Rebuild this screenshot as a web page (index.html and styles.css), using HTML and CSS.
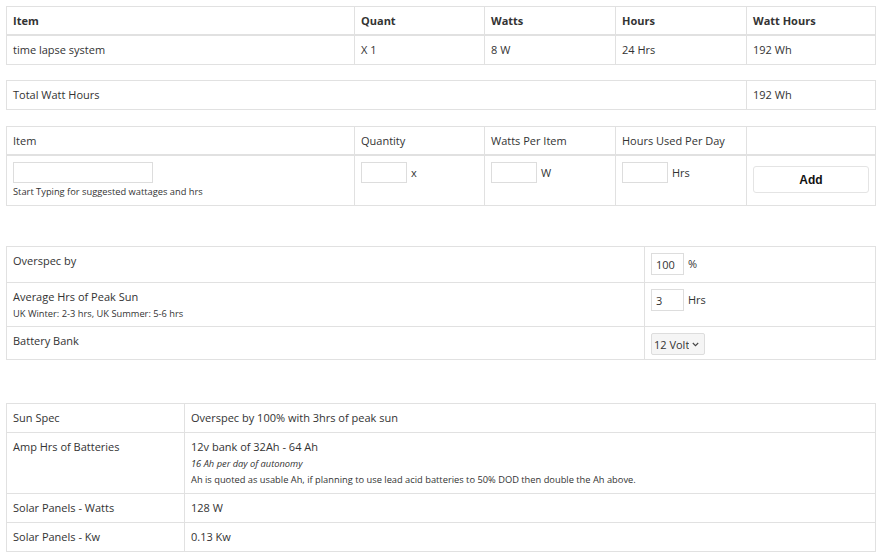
FILE: index.html
```html
<!DOCTYPE html>
<html lang="en">

<head>
  <meta charset="UTF-8">
  <meta name="viewport" content="width=device-width, initial-scale=1.0">
  <title>Solar Calculator</title>
  <link rel="stylesheet" href="styles.css">
</head>

<body>
  <div class="calc">
    <table class="grid items">
      <colgroup>
        <col class="c-item"><col class="c-q"><col class="c-num"><col class="c-num"><col>
      </colgroup>
      <thead>
        <tr>
          <th>Item</th>
          <th>Quant</th>
          <th>Watts</th>
          <th>Hours</th>
          <th>Watt Hours</th>
        </tr>
      </thead>
      <tbody>
        <tr>
          <td>time lapse system</td>
          <td>X 1</td>
          <td>8 W</td>
          <td>24 Hrs</td>
          <td>192 Wh</td>
        </tr>
      </tbody>
    </table>

    <table class="grid total">
      <colgroup>
        <col class="c-item"><col class="c-q"><col class="c-num"><col class="c-num"><col>
      </colgroup>
      <tr>
        <td colspan="4">Total Watt Hours</td>
        <td>192 Wh</td>
      </tr>
    </table>

    <table class="grid add-form">
      <colgroup>
        <col class="c-item"><col class="c-q"><col class="c-num"><col class="c-num"><col>
      </colgroup>
      <thead>
        <tr>
          <th>Item</th>
          <th>Quantity</th>
          <th>Watts Per Item</th>
          <th>Hours Used Per Day</th>
          <th></th>
        </tr>
      </thead>
      <tbody>
        <tr>
          <td>
            <input type="text" class="field wide">
            <small class="hint">Start Typing for suggested wattages and hrs</small>
          </td>
          <td><input type="text" class="field short"><span class="unit">x</span></td>
          <td><input type="text" class="field short"><span class="unit">W</span></td>
          <td><input type="text" class="field short"><span class="unit">Hrs</span></td>
          <td class="btn-cell"><button class="add-btn">Add</button></td>
        </tr>
      </tbody>
    </table>

    <table class="grid settings">
      <colgroup>
        <col class="c-label"><col>
      </colgroup>
      <tr class="r-over">
        <td>Overspec by</td>
        <td><input type="text" class="field tiny" value="100"><span class="unit">%</span></td>
      </tr>
      <tr>
        <td>Average Hrs of Peak Sun<small class="hint">UK Winter: 2-3 hrs, UK Summer: 5-6 hrs</small></td>
        <td><input type="text" class="field tiny" value="3"><span class="unit">Hrs</span></td>
      </tr>
      <tr class="r-bank">
        <td>Battery Bank</td>
        <td>
          <span class="select-wrap">
            <select class="volt">
              <option>12 Volt</option>
              <option>24 Volt</option>
              <option>48 Volt</option>
            </select>
            <svg class="chev" width="7" height="5" viewBox="0 0 7 5"><path d="M0.8 1 L3.5 3.7 L6.2 1" fill="none" stroke="#444" stroke-width="1.1"/></svg>
          </span>
        </td>
      </tr>
    </table>

    <table class="grid results">
      <colgroup>
        <col class="c-res"><col>
      </colgroup>
      <tr>
        <td>Sun Spec</td>
        <td>Overspec by 100% with 3hrs of peak sun</td>
      </tr>
      <tr class="r-amp">
        <td>Amp Hrs of Batteries</td>
        <td>
          12v bank of 32Ah - 64 Ah
          <small class="hint"><em>16 Ah per day of autonomy</em></small>
          <small class="hint">Ah is quoted as usable Ah, if planning to use lead acid batteries to 50% DOD then double the Ah above.</small>
        </td>
      </tr>
      <tr>
        <td>Solar Panels - Watts</td>
        <td>128 W</td>
      </tr>
      <tr>
        <td>Solar Panels - Kw</td>
        <td>0.13 Kw</td>
      </tr>
    </table>
  </div>
</body>

</html>
```

FILE: styles.css
```css
body {
  font-family: 'Open Sans', sans-serif;
  font-size: 11px;
  margin: 0;
  padding: 0;
  background-color: #FFFFFF;
  color: #333333;
}

.calc {
  padding: 6px 4px 0 6px;
}

.grid {
  width: 100%;
  border-collapse: collapse;
  table-layout: fixed;
  margin-bottom: 15px;
}

.grid th,
.grid td {
  border: 1px solid #e1e1e1;
  padding: 6px 6px;
  line-height: 16px;
  text-align: left;
  vertical-align: top;
}

.grid thead th {
  border-bottom-width: 2px;
  padding-bottom: 5px;
}

.grid th {
  font-weight: 700;
}

.add-form th {
  font-weight: 400;
}

.c-item { width: 348px; }
.c-q { width: 130px; }
.c-num { width: 131px; }
.c-label { width: 638px; }
.c-res { width: 178px; }

.total {
  margin-bottom: 16px;
}

.add-form {
  margin-bottom: 40px;
}

.add-form tbody td {
  padding-bottom: 7px;
}

.field {
  font-family: 'Open Sans', sans-serif;
  font-size: 11px;
  color: #333333;
  border: 1px solid #dddddd;
  height: 21px;
  padding: 0 4px;
  box-sizing: border-box;
  vertical-align: top;
}

.field.wide { width: 140px; }
.field.short { width: 46px; }
.field.tiny { width: 33px; height: 22px; }

.unit {
  display: inline-block;
  margin-left: 4px;
  line-height: 21px;
  vertical-align: top;
}

.hint {
  display: block;
  font-size: 9.3px;
  line-height: 13px;
  margin-top: 2px;
}

.add-form .btn-cell {
  padding: 10px 6px 0 6px;
}

.add-btn {
  display: block;
  width: 100%;
  height: 27px;
  background: #FFFFFF;
  border: 1px solid #e4e4e4;
  border-radius: 3px;
  font-family: 'Liberation Sans', Arial, sans-serif;
  font-weight: 700;
  font-size: 12px;
  color: #111111;
  cursor: pointer;
}

.settings {
  margin-bottom: 43px;
}

.settings td {
  padding-bottom: 6px;
}

.settings .r-over td {
  padding-bottom: 7px;
}

.settings .r-bank td {
  padding-bottom: 4px;
}

.select-wrap {
  position: relative;
  display: inline-block;
  vertical-align: top;
}

.volt {
  -webkit-appearance: none;
  appearance: none;
  display: block;
  font-family: 'Open Sans', sans-serif;
  font-size: 11px;
  color: #333333;
  background: #f5f5f5;
  border: 1px solid #dddddd;
  border-radius: 2px;
  height: 22px;
  width: 54px;
  padding: 0 15px 0 2px;
}

.chev {
  position: absolute;
  right: 6px;
  top: 9px;
  pointer-events: none;
}

.results .hint {
  line-height: 16px;
  margin-top: 0;
}

.results .r-amp td {
  padding-bottom: 5px;
}

.results .r-amp .hint:first-of-type {
  margin-top: 1px;
}
```
